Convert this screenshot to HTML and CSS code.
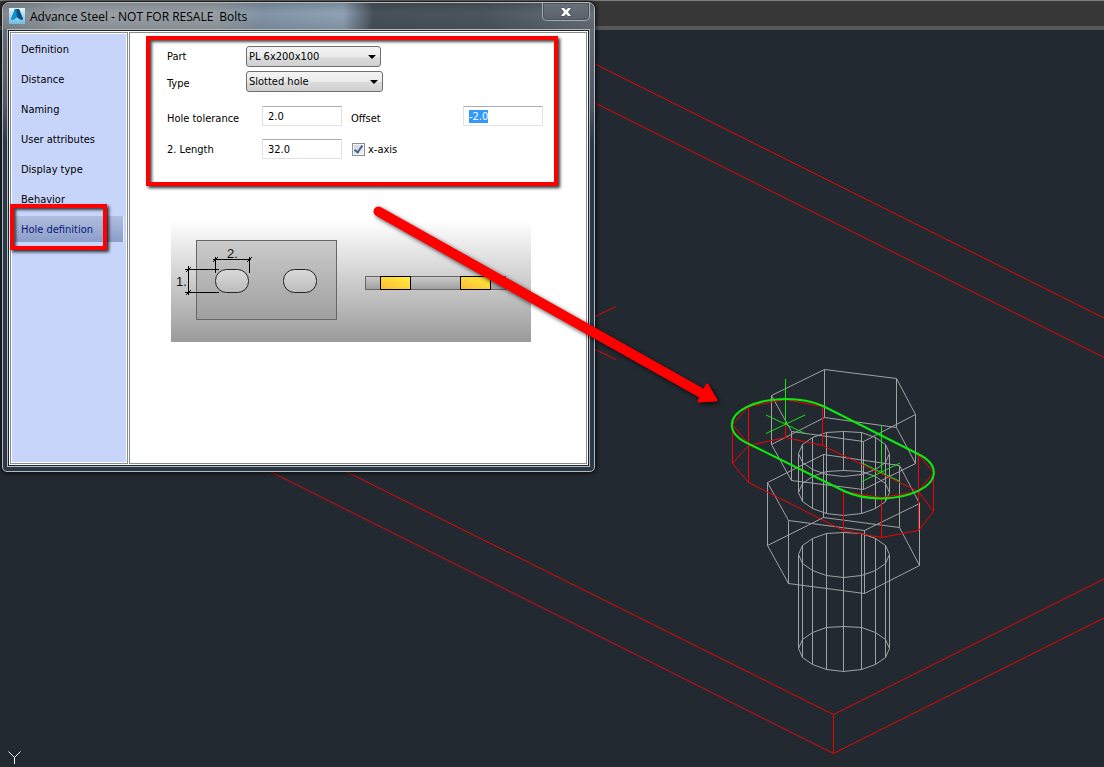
FILE: index.html
```html
<!DOCTYPE html>
<html lang="en">
<head>
    <meta charset="UTF-8">
    <meta name="viewport" content="width=device-width, initial-scale=1.0">
    <title>Advance Steel - Bolts</title>
    <link rel="stylesheet" href="styles.css">
</head>
<body>
    <div class="ribbon"></div>

    <!-- Model space -->
    <svg class="model" viewBox="0 0 1104 767" preserveAspectRatio="xMinYMin slice" aria-hidden="true">
        <defs>
            <polygon id="ring" points="-45,0 -41,-9 -31,-16 -17,-21 0,-22 18,-21 32,-16 42,-9 46,0 42,9 32,16 18,21 0,23 -17,21 -31,16 -41,9"/>
        </defs>
        <g class="plate">
            <path d="M590 61.5L1104 318M590 100.5L1104 357.5"/>
            <path d="M590 319L616 306.5M590 347L616 359.5"/>
            <path d="M270 471.5L833.5 753.5L1104 618M346 471.5L833.5 714.5L1104 579M833.5 714.5V753.5"/>
        </g>
        <g class="bolt">
            <!-- head -->
            <path d="M771.5 395.5L824.5 369.5L896.5 378.5L915.5 414.5L863.5 441.5L791.5 431.5Z"/>
            <path d="M771.5 444.5L824.5 417.5L896.5 427.5L915.5 463.5L863.5 489.5L791.5 480.5Z"/>
            <path d="M771.5 395.5V444.5M824.5 369.5V417.5M896.5 378.5V427.5M915.5 414.5V463.5M863.5 441.5V489.5M791.5 431.5V480.5"/>
            <!-- nut -->
            <path d="M767.5 482.5L823.5 454.5L899.5 465.5L919.5 503.5L864.5 530.5L788.5 520.5Z"/>
            <path d="M767.5 545.5L823.5 517.5L899.5 527.5L919.5 565.5L864.5 593.5L788.5 583.5Z"/>
            <path d="M767.5 482.5V545.5M823.5 454.5V517.5M899.5 465.5V527.5M919.5 503.5V565.5M864.5 530.5V593.5M788.5 520.5V583.5"/>
            <!-- shank -->
            <use href="#ring" x="843.5" y="453.5"/>
            <use href="#ring" x="843.5" y="492.5"/>
            <use href="#ring" x="843.5" y="554.5"/>
            <use href="#ring" x="843.5" y="648.5"/>
            <path d="M798.5 453.5V492.5M802.5 444.5V501.5M812.5 437.5V508.5M826.5 432.5V513.5M843.5 431.5V470.5M861.5 432.5V513.5M875.5 437.5V508.5M885.5 444.5V501.5M889.5 453.5V492.5"/>
            <path d="M798.5 554.5V648.5M802.5 545.5V657.5M812.5 538.5V664.5M826.5 533.5V669.5M843.5 532.5V671.5M861.5 533.5V669.5M875.5 538.5V664.5M885.5 545.5V657.5M889.5 554.5V648.5"/>
        </g>
        <g class="slot-body">
            <path d="M748.5 444.5L732.5 424.5L748.5 406.5L785.5 399.5L822.5 406.5V445.5L785.5 437.5L748.5 445.5L732.5 463.5L748.5 482.5L843.5 530.5L881.5 537.5L918.5 530.5L933.5 511.5L918.5 491.5L822.5 445.5"/>
            <path d="M732.5 424.5V463.5M748.5 406.5V482.5M785.5 424.5V437.5M843.5 491.5V530.5M881.5 498.5V537.5M918.5 454.5V530.5M933.5 472.5V511.5"/>
            <path d="M918.5 454.5L933.5 472.5L918.5 491.5L881.5 497.5L843.5 491.5"/>
        </g>
        <g class="slot">
            <path class="slot-edge" d="M749 444A52 25 0 0 1 823 406L918 454A51 25 0 0 1 844 491Z"/>
            <path d="M785.5 379V424M766 415L805 433.5M766 433.5L805 415M881.5 425V472M862 463L900 481.5M862 481.5L900 463"/>
        </g>
        <path class="ucs" d="M8.5 751.5L14.5 757.5L20.5 751.5M14.5 757.5V764"/>
    </svg>

    <form class="dialog">
        <header class="titlebar">
            <svg class="logo" viewBox="0 0 16 16" aria-hidden="true">
                <defs>
                    <linearGradient id="logoBg" x1="0" y1="0" x2="0" y2="1">
                        <stop offset="0" stop-color="#e4f4fb"/>
                        <stop offset="1" stop-color="#6fbde2"/>
                    </linearGradient>
                </defs>
                <rect width="16" height="16" fill="url(#logoBg)"/>
                <path d="M6 1H10L14 11Q12 13 8 9Q4 13 2 11Z" fill="#0c6fae"/>
                <path d="M6 1L8 9Q4 13 2 11Z" fill="#1391cf"/>
                <path d="M8 1H10L14 11Q12 13 8 9Z" fill="#075083"/>
            </svg>
            <span class="title">Advance Steel - NOT FOR RESALE</span>
            <span class="subtitle">Bolts</span>
            <button type="button" class="close" aria-label="Close">
                <svg viewBox="0 0 12 10" aria-hidden="true"><path d="M1 1H4L6 3L8 1H11L8 5L11 9H8L6 7L4 9H1L4 5Z"/></svg>
            </button>
        </header>

        <div class="client">
            <nav class="sidebar">
                <a href="#definition">Definition</a>
                <a href="#distance">Distance</a>
                <a href="#naming">Naming</a>
                <a href="#attributes">User attributes</a>
                <a href="#display">Display type</a>
                <a href="#behavior">Behavior</a>
                <a href="#hole" class="active">Hole definition</a>
            </nav>

            <main class="content">
                <section class="fields">
                    <div class="row">
                        <label for="part">Part</label>
                        <span class="combo"><select id="part"><option>PL 6x200x100</option></select></span>
                    </div>
                    <div class="row">
                        <label for="type" class="low">Type</label>
                        <span class="combo wide"><select id="type"><option>Slotted hole</option></select></span>
                    </div>
                    <div class="row values">
                        <label for="tolerance" class="low">Hole tolerance</label>
                        <input type="text" id="tolerance" value="2.0">
                        <label for="offset" class="low">Offset</label>
                        <input type="text" id="offset" value="-2.0">
                    </div>
                    <div class="row values">
                        <label for="length">2. Length</label>
                        <input type="text" id="length" value="32.0">
                        <label class="check"><input type="checkbox" checked>x-axis</label>
                    </div>
                </section>

                <svg class="diagram" viewBox="0 0 360 122" role="img" aria-label="Slotted hole dimensions">
                    <defs>
                        <linearGradient id="backdrop" x1="0" y1="0" x2="0" y2="1">
                            <stop offset="0" stop-color="#ffffff"/>
                            <stop offset="1" stop-color="#9b9b9b"/>
                        </linearGradient>
                        <linearGradient id="steel" x1="0" y1="0" x2="0" y2="1">
                            <stop offset="0" stop-color="#cbcbcb"/>
                            <stop offset="1" stop-color="#9f9f9f"/>
                        </linearGradient>
                        <linearGradient id="hole" x1="0" y1="0" x2="0" y2="1">
                            <stop offset="0" stop-color="#dadada"/>
                            <stop offset="1" stop-color="#bcbcbc"/>
                        </linearGradient>
                        <linearGradient id="cut" x1="0" y1="1" x2="1" y2="0">
                            <stop offset="0" stop-color="#ffb83a"/>
                            <stop offset="1" stop-color="#fff13a"/>
                        </linearGradient>
                    </defs>
                    <rect width="360" height="122" fill="url(#backdrop)"/>
                    <rect x="25.5" y="20.5" width="140" height="79" fill="url(#steel)" stroke="#666"/>
                    <rect x="44.5" y="49.5" width="33" height="23" rx="11" fill="url(#hole)" stroke="#222"/>
                    <rect x="112.5" y="49.5" width="33" height="23" rx="11" fill="url(#hole)" stroke="#222"/>
                    <path class="dimension" d="M42 39.5H80M44.5 37V53M78.5 37V53M17.5 46V75M14 49.5H48M14 72.5H48"/>
                    <path class="dimension" d="M42 42L47 37M76 42L81 37M15 52L20 47M15 75L20 70"/>
                    <text x="5" y="66">1.</text>
                    <text x="56" y="38">2.</text>
                    <rect x="194.5" y="56.5" width="140" height="13" fill="url(#steel)" stroke="#666"/>
                    <rect x="209.5" y="56.5" width="30" height="13" fill="url(#cut)" stroke="#000"/>
                    <rect x="289.5" y="56.5" width="30" height="13" fill="url(#cut)" stroke="#000"/>
                </svg>
            </main>
        </div>
    </form>

    <!-- Callout arrow from the dialog to the slot -->
    <svg class="callout" viewBox="0 0 1104 767" preserveAspectRatio="xMinYMin slice" aria-hidden="true">
        <path d="M378.5 211.5L704 394.5" stroke-width="10"/>
        <path d="M707 385L716 400L699 401L703 394Z" stroke-width="3" fill="#ff0000"/>
    </svg>

    <script>
        const offset = document.getElementById('offset');
        offset.focus();
        offset.select();
    </script>
</body>
</html>
```
FILE: styles.css
```css
*,
*::after {
    margin: 0;
    padding: 0;
    box-sizing: border-box;
}

body {
    font-family: "DejaVu Sans Condensed", "DejaVu Sans", sans-serif;
    font-size: 11px;
    color: #000;
    background-color: #222930;
    min-height: 100vh;
    position: relative;
    overflow: hidden;
}

.ribbon {
    height: 30px;
    background-color: #373737;
    border-top: 1px solid #7d807d;
    border-bottom: 4px solid #585858;
}

.model,
.callout {
    position: absolute;
    top: 0;
    left: 0;
    width: 100%;
    height: 100%;
    fill: none;
    pointer-events: none;
}

.plate {
    stroke: #e60505;
}

.bolt {
    stroke: #a0a2a4;
}

.slot-body {
    stroke: #f00303;
}

.slot {
    stroke: #0bea0b;
}

.slot-edge {
    stroke-width: 2;
}

.ucs {
    stroke: #f4f4f4;
}

.callout {
    stroke: #ff0000;
    stroke-linecap: round;
    stroke-linejoin: round;
    filter: drop-shadow(2px 2px 2px rgba(0, 0, 0, 0.7));
}

/* Dialog window */
.dialog {
    position: absolute;
    top: 2px;
    left: 2px;
    width: 593px;
    padding: 0 4px 4px;
    border: 1px solid #b3bbc1;
    border-radius: 7px 7px 5px 5px;
    background: linear-gradient(#69737c, #4e5965 100px, #2b3946 140px, #2b3946);
    box-shadow: 0 0 4px 1px rgba(0, 0, 0, 0.8);
}

.titlebar {
    height: 26px;
    margin: 0 -4px;
    padding-left: 6px;
    display: flex;
    align-items: center;
    border-radius: 6px 6px 0 0;
    background: linear-gradient(rgba(0, 0, 0, 0.15), rgba(0, 0, 0, 0) 40%, rgba(0, 0, 0, 0.1)),
        linear-gradient(90deg, #81888f, #989fa5 60px, #989fa5 210px, #8295a7 260px, #8fa2b4 340px, #48515a 370px, #4c555e 480px, #66707a);
    font-family: "Open Sans", sans-serif;
    font-size: 12px;
}

.logo {
    width: 16px;
    height: 16px;
    margin-right: 5px;
}

.subtitle {
    margin-left: 6px;
}

.close {
    align-self: flex-start;
    width: 48px;
    height: 18px;
    margin-left: auto;
    margin-right: 4px;
    border: 1px solid #a4abb1;
    border-top: none;
    border-radius: 0 0 5px 5px;
    background: linear-gradient(#68717a, #59626b);
    box-shadow: inset 0 0 0 1px #4a525a;
}

.close svg {
    width: 12px;
    height: 10px;
    display: block;
    margin: 0 auto;
    fill: #fff;
    stroke: #3e444a;
    stroke-width: 1;
    paint-order: stroke;
}

.client {
    display: flex;
    gap: 1px;
    min-height: 438px;
    padding: 2px;
    border: 1px solid #b3bbc1;
    outline: 1px solid #1b2229;
    outline-offset: -2px;
    background-color: #fff;
}

/* Sidebar */
.sidebar {
    width: 118px;
    padding: 1px;
    border: 1px solid #868b90;
    background-color: #c8d5fb;
    background-clip: content-box;
}

.sidebar a {
    display: block;
    position: relative;
    height: 26px;
    margin: 2px 2px 4px 3px;
    padding-left: 6px;
    line-height: 28px;
    color: #000;
    text-decoration: none;
    white-space: nowrap;
}

.sidebar .active {
    color: #0a1a7a;
    background: linear-gradient(#b0bedd, #8b9dca);
    border-right: 1px solid #e6ecfc;
}

.sidebar .active::after,
.fields {
    border: 4px solid #ff0000;
    box-shadow: 2px 2px 3px rgba(0, 0, 0, 0.8), inset 2px 2px 3px rgba(0, 0, 0, 0.7);
}

.sidebar .active::after {
    content: "";
    position: absolute;
    top: -12px;
    left: -5px;
    width: 97px;
    height: 46px;
    z-index: 1;
}

/* Hole definition page */
.content {
    flex: 1;
    padding: 3px 28px 20px 16px;
    border: 1px solid #868b90;
}

.fields {
    height: 150px;
    padding: 6px 0 0 17px;
}

.row {
    display: grid;
    grid-template-columns: 79px 1fr;
    height: 21px;
    margin-bottom: 4px;
    align-items: center;
}

.values {
    grid-template-columns: 95px 89px 112px 80px;
    height: 20px;
    margin: 14px 0 13px;
}

.values + .values {
    margin-top: 0;
}

.low {
    padding-top: 4px;
}

.combo {
    position: relative;
    width: 135px;
    height: 21px;
}

.combo.wide {
    width: 137px;
}

.combo::after {
    content: "";
    position: absolute;
    top: 9px;
    right: 5px;
    border: 4px solid transparent;
    border-top-color: #000;
    border-bottom: none;
    pointer-events: none;
}

.combo select {
    appearance: none;
    display: block;
    width: 100%;
    height: 100%;
    padding-left: 2px;
    border: 1px solid #707070;
    border-radius: 3px;
    background: linear-gradient(#f3f3f3, #ebebeb 50%, #dddddd 50%, #cfcfcf);
    font: inherit;
    color: #000;
}

input[type="text"] {
    width: 80px;
    height: 20px;
    padding: 0 5px;
    border: 1px solid #dfe2e8;
    border-top-color: #abadb3;
    border-radius: 1px;
    background-color: #fff;
    font: inherit;
    outline: none;
}

input::selection {
    color: #fff;
    background-color: #3399ff;
}

.check {
    display: flex;
    align-items: center;
    gap: 3px;
    padding-left: 1px;
}

.check input {
    appearance: none;
    position: relative;
    width: 13px;
    height: 13px;
    border: 1px solid #8e8f8f;
    background: linear-gradient(135deg, #cbcfd5, #f6f6f6);
    box-shadow: inset 0 0 0 1px #f4f4f4;
}

.check input:checked::after {
    content: "";
    position: absolute;
    top: 0;
    left: 3px;
    width: 5px;
    height: 9px;
    border: solid #4a5f97;
    border-width: 0 2px 2px 0;
    transform: rotate(35deg);
}

.diagram {
    display: block;
    width: 360px;
    height: 122px;
    margin: 34px 0 0 25px;
    fill: none;
}

.diagram text {
    fill: #111;
    font-family: "Liberation Sans", sans-serif;
    font-size: 13px;
}

.dimension {
    stroke: #000;
}
```
